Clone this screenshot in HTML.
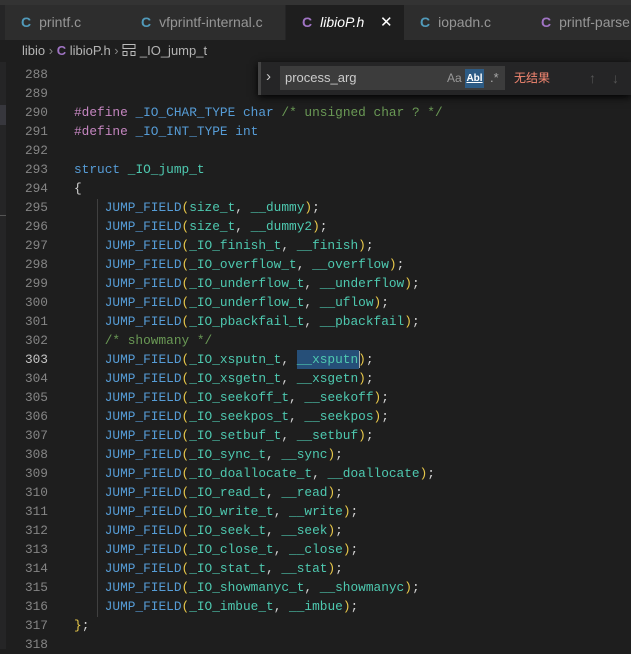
<!DOCTYPE html><html><head><meta charset="utf-8"><style>
body{margin:0;width:631px;height:649px;background:#1e1e1e;overflow:hidden;position:relative;font-family:"Liberation Sans","Noto Sans CJK SC",sans-serif}
.a{position:absolute}
.tab{position:absolute;top:5px;height:35px;background:#2d2d2d;color:#969696;font-size:14px;line-height:35px;border-right:1px solid #252526;white-space:nowrap;overflow:hidden}
.tab b{font-weight:bold;margin:0 8px 0 16px}
.cb{color:#519aba}.cp{color:#a074c4}
.ln{position:absolute;left:0;width:48px;text-align:right;color:#858585;font:12.8px/19px "Liberation Mono",monospace}
.cd{position:absolute;left:74px;color:#d4d4d4;font:12.8px/19px "Liberation Mono",monospace;white-space:pre}
.k{color:#569cd6}.p{color:#c586c0}.t{color:#4ec9b0}.g{color:#6a9955}.y{color:#e8c84a}.f{color:#569cd6}
</style></head><body>
<div class="a" style="left:0;top:0;width:631px;height:5px;background:#333"></div>
<div class="a" style="left:0;top:5px;width:5px;height:35px;background:#252526"></div>
<div class="tab" style="left:5px;width:120px"><b class="cb">C</b>printf.c</div>
<div class="tab" style="left:125px;width:160px"><b class="cb">C</b>vfprintf-internal.c</div>
<div class="tab" style="left:286px;width:118px;background:#1e1e1e;color:#fff"><b class="cp">C</b><i>libioP.h</i><span style="position:absolute;left:94px;font-size:15px">✕</span></div>
<div class="tab" style="left:404px;width:121px"><b class="cb">C</b>iopadn.c</div>
<div class="tab" style="left:525px;width:120px"><b class="cp">C</b>printf-parse.h</div>
<div class="a" style="left:22px;top:40px;height:22px;line-height:22px;font-size:13px;color:#b4b4b4;white-space:nowrap">libio <span style="color:#888">›</span> <b class="cp">C</b> libioP.h <span style="color:#888">›</span> <svg width="14" height="12" viewBox="0 0 14 12" style="vertical-align:-1px"><rect x="1" y="0.5" width="12" height="4" fill="none" stroke="#bbb"/><rect x="1" y="7.5" width="4" height="4" fill="none" stroke="#bbb"/><rect x="9" y="7.5" width="4" height="4" fill="none" stroke="#bbb"/></svg> _IO_jump_t</div>
<div class="a" style="left:0;top:62px;width:6px;height:587px;background:#252526"></div>
<div class="a" style="left:0;top:105px;width:6px;height:20px;background:#37373d"></div>
<div class="a" style="left:0;top:215px;width:6px;height:1px;background:#555"></div>
<div class="a" style="left:97px;top:199px;width:1px;height:418px;background:#404040"></div>
<div class="a" style="left:297px;top:350px;width:62px;height:19px;background:#264f78"></div>
<div class="a" style="left:359px;top:351px;width:1px;height:17px;background:#aeafad"></div>
<div id="c"></div>
<div class="a" style="left:258px;top:62px;width:373px;height:33px;background:#252526;box-shadow:0 2px 8px #000"></div>
<div class="a" style="left:258px;top:62px;width:3px;height:33px;background:#454545"></div>
<div class="a" style="left:266px;top:68px;color:#ccc;font-size:15px">›</div>
<div class="a" style="left:280px;top:66px;width:225px;height:24px;background:#3c3c3c"></div>
<div class="a" style="left:285px;top:66px;line-height:24px;font-size:13px;color:#ccc">process_arg</div>
<div class="a" style="left:447px;top:66px;line-height:24px;font-size:12px;color:#999">Aa</div>
<div class="a" style="left:465px;top:69px;width:19px;height:19px;background:#2d5b84;color:#fff;font-size:10px;font-weight:bold;line-height:19px;text-align:center;text-decoration:underline">Abl</div>
<div class="a" style="left:490px;top:66px;line-height:24px;font-size:13px;color:#aaa">.*</div>
<div class="a" style="left:514px;top:66px;line-height:24px;font-size:12px;color:#f48771">无结果</div>
<div class="a" style="left:589px;top:66px;line-height:24px;font-size:14px;color:#555">↑</div>
<div class="a" style="left:612px;top:66px;line-height:24px;font-size:14px;color:#555">↓</div>
<script>
var L={288:'',289:'',
290:'<span class=p>#define</span> <span class=k>_IO_CHAR_TYPE</span> <span class=k>char</span> <span class=g>/* unsigned char ? */</span>',
291:'<span class=p>#define</span> <span class=k>_IO_INT_TYPE</span> <span class=k>int</span>',
292:'',293:'<span class=k>struct</span> <span class=t>_IO_jump_t</span>',294:'{'};
var F=[['size_t','__dummy'],['size_t','__dummy2'],['_IO_finish_t','__finish'],['_IO_overflow_t','__overflow'],['_IO_underflow_t','__underflow'],['_IO_underflow_t','__uflow'],['_IO_pbackfail_t','__pbackfail'],null,['_IO_xsputn_t','__xsputn'],['_IO_xsgetn_t','__xsgetn'],['_IO_seekoff_t','__seekoff'],['_IO_seekpos_t','__seekpos'],['_IO_setbuf_t','__setbuf'],['_IO_sync_t','__sync'],['_IO_doallocate_t','__doallocate'],['_IO_read_t','__read'],['_IO_write_t','__write'],['_IO_seek_t','__seek'],['_IO_close_t','__close'],['_IO_stat_t','__stat'],['_IO_showmanyc_t','__showmanyc'],['_IO_imbue_t','__imbue']];
F.forEach(function(f,i){L[295+i]=f?'    <span class=f>JUMP_FIELD</span><span class=y>(</span><span class=t>'+f[0]+'</span>, <span class=t>'+f[1]+'</span><span class=y>)</span>;':'    <span class=g>/* showmany */</span>';});
L[317]='<span class=y>}</span>;';L[318]='';
var h='';for(var n=288;n<=318;n++){var y=65+19*(n-288);h+='<div class=ln style="top:'+y+'px'+(n==303?';color:#c6c6c6':'')+'">'+n+'</div><div class=cd style="top:'+y+'px">'+L[n]+'</div>';}
document.getElementById('c').innerHTML=h;
</script>
</body></html>
